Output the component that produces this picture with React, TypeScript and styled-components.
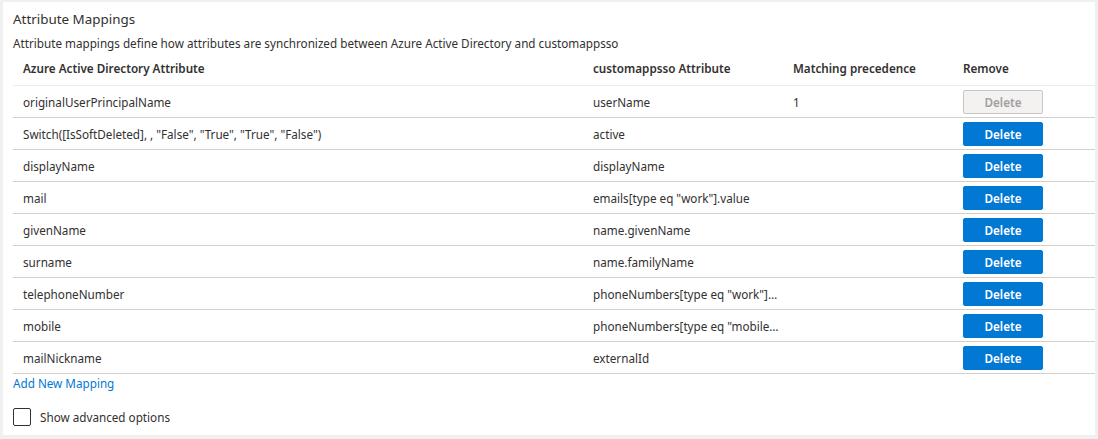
import React from 'react';
import styled, { createGlobalStyle } from 'styled-components';

const GlobalStyle = createGlobalStyle`
  html, body {
    margin: 0;
    padding: 0;
    background: #f0f0f0;
  }
  body {
    font-family: "Segoe UI", "Noto Sans", "Open Sans", sans-serif;
    color: #323130;
  }
`;

type Mapping = {
  source: string;
  target: string;
  precedence?: string;
  locked?: boolean;
};

// 属性マッピング一覧
const mappings: Mapping[] = [
  { source: 'originalUserPrincipalName', target: 'userName', precedence: '1', locked: true },
  { source: 'Switch([IsSoftDeleted], , "False", "True", "True", "False")', target: 'active' },
  { source: 'displayName', target: 'displayName' },
  { source: 'mail', target: 'emails[type eq "work"].value' },
  { source: 'givenName', target: 'name.givenName' },
  { source: 'surname', target: 'name.familyName' },
  { source: 'telephoneNumber', target: 'phoneNumbers[type eq "work"].value' },
  { source: 'mobile', target: 'phoneNumbers[type eq "mobile"].value' },
  { source: 'mailNickname', target: 'externalId' },
];

function App() {
  return (
    <Page>
      <GlobalStyle />
      <Panel>
        <Title>Attribute Mappings</Title>
        <Description>
          Attribute mappings define how attributes are synchronized between Azure Active Directory and customappsso
        </Description>
        <Table>
          <HeaderRow>
            <HeaderCell>Azure Active Directory Attribute</HeaderCell>
            <HeaderCell>customappsso Attribute</HeaderCell>
            <HeaderCell>Matching precedence</HeaderCell>
            <HeaderCell>Remove</HeaderCell>
          </HeaderRow>
          {mappings.map((m) => (
            <Row key={m.source}>
              <Cell>{m.source}</Cell>
              <Cell $tight>{m.target}</Cell>
              <Cell>{m.precedence}</Cell>
              <Cell>
                <DeleteButton disabled={m.locked} $disabled={m.locked}>
                  Delete
                </DeleteButton>
              </Cell>
            </Row>
          ))}
        </Table>
        <AddLink href="#">Add New Mapping</AddLink>
        <CheckRow>
          <CheckBox />
          <CheckLabel>Show advanced options</CheckLabel>
        </CheckRow>
      </Panel>
    </Page>
  );
}

export default App;

const Page = styled.div`
  padding: 2px 3px 2px 3px;
`;

const Panel = styled.div`
  background: #fff;
  width: 1092px;
  height: 433px;
  box-sizing: border-box;
  padding: 7px 0 0 10px;
`;

const Title = styled.div`
  font-size: 13.4px;
  line-height: 20px;
`;

const Description = styled.div`
  font-size: 11.7px;
  line-height: 20px;
  margin-top: 4px;
`;

const Table = styled.div`
  display: flex;
  flex-direction: column;
`;

const HeaderRow = styled.div`
  display: grid;
  grid-template-columns: 570px 200px 170px 1fr;
  border-bottom: 1px solid #edebe9;
`;

const HeaderCell = styled.div`
  font-size: 11.7px;
  font-weight: 600;
  line-height: 20px;
  padding: 5px 10px 7px;
`;

const Row = styled.div`
  display: grid;
  grid-template-columns: 570px 200px 170px 1fr;
  height: 32px;
  box-sizing: border-box;
  border-bottom: 1px solid #d2d0ce;
  align-items: center;
`;

const Cell = styled.div<{ $tight?: boolean }>`
  font-size: 11.7px;
  line-height: 20px;
  padding: 0 ${(p) => (p.$tight ? '3px' : '10px')} 0 10px;
  white-space: nowrap;
  overflow: hidden;
  text-overflow: ellipsis;
`;

const DeleteButton = styled.button<{ $disabled?: boolean }>`
  display: block;
  width: 80px;
  height: 24px;
  box-sizing: border-box;
  border-radius: 2px;
  font-family: inherit;
  font-size: 11.7px;
  font-weight: 600;
  padding: 0;
  cursor: ${(p) => (p.$disabled ? 'default' : 'pointer')};
  background: ${(p) => (p.$disabled ? '#f3f2f1' : '#0078d4')};
  color: ${(p) => (p.$disabled ? '#a19f9d' : '#fff')};
  border: 1px solid ${(p) => (p.$disabled ? '#c8c6c4' : '#0078d4')};
`;

const AddLink = styled.a`
  display: block;
  font-size: 11.7px;
  line-height: 18px;
  color: #0078d4;
  text-decoration: none;
  width: fit-content;
`;

const CheckRow = styled.label`
  display: flex;
  align-items: center;
  gap: 9px;
  margin-top: 15px;
  height: 20px;
`;

const CheckBox = styled.span`
  width: 18px;
  height: 18px;
  box-sizing: border-box;
  border: 1px solid #323130;
  border-radius: 2px;
  background: #fff;
`;

const CheckLabel = styled.span`
  font-size: 11.7px;
  line-height: 20px;
`;
